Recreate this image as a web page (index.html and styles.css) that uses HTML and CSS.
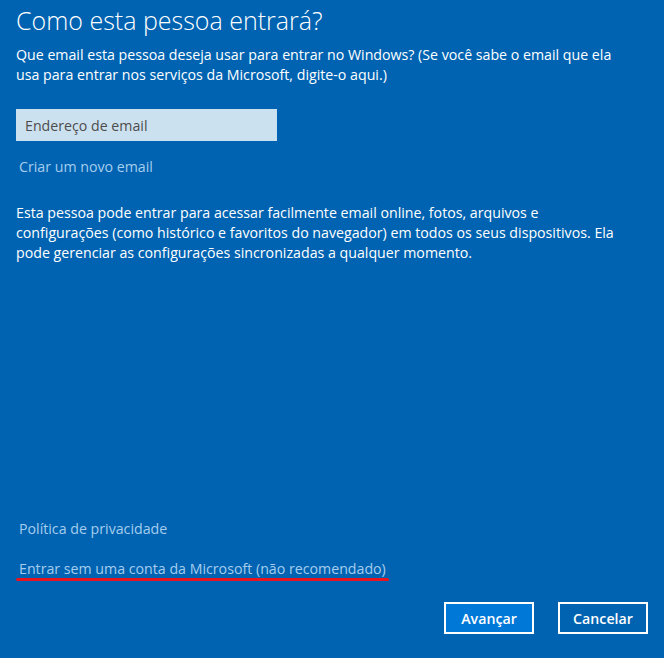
FILE: index.html
```html
<!DOCTYPE html>
<html lang="pt-BR">
<head>
<meta charset="utf-8">
<title>Como esta pessoa entrará?</title>
<link rel="stylesheet" href="styles.css">
</head>
<body>
<div class="page">
  <main class="content">
    <h1 class="title">Como esta pessoa entrará?</h1>
    <p class="intro">Que email esta pessoa deseja usar para entrar no Windows? (Se você sabe o email que ela usa para entrar nos serviços da Microsoft, digite-o aqui.)</p>
    <div class="field">
      <input class="email" type="text" placeholder="Endereço de email">
    </div>
    <a class="link create" href="#">Criar um novo email</a>
    <p class="info">Esta pessoa pode entrar para acessar facilmente email online, fotos, arquivos e configurações (como histórico e favoritos do navegador) em todos os seus dispositivos. Ela pode gerenciar as configurações sincronizadas a qualquer momento.</p>
  </main>
  <footer class="footer">
    <a class="link privacy" href="#">Política de privacidade</a>
    <a class="link local" href="#">Entrar sem uma conta da Microsoft (não recomendado)</a>
    <div class="actions">
      <button class="btn primary" type="button">Avançar</button>
      <button class="btn" type="button">Cancelar</button>
    </div>
  </footer>
</div>
</body>
</html>
```

FILE: styles.css
```css
html, body {
  margin: 0;
  padding: 0;
  height: 100%;
}

body {
  background: #0063b1;
  color: #ffffff;
  font-family: "Open Sans", "Noto Sans", "Liberation Sans", sans-serif;
  font-size: 14.2px;
  line-height: 20px;
}

.page {
  height: 100%;
  box-sizing: border-box;
  display: flex;
  flex-direction: column;
  padding: 0 16px 24px 16px;
}

.content {
  display: flex;
  flex-direction: column;
  align-items: flex-start;
}

.title {
  margin: 0;
  font-size: 25px;
  font-weight: 300;
  line-height: 40px;
  height: 40px;
}

.intro {
  margin: 5px 0 0 0;
  max-width: 618px;
}

.field {
  margin-top: 24px;
}

.email {
  display: block;
  width: 261px;
  height: 32px;
  box-sizing: border-box;
  border: none;
  outline: none;
  background: #cce1f0;
  padding: 0 9px;
  font-family: inherit;
  font-size: 14.2px;
  color: #4c4c4c;
}

.email::placeholder {
  color: #4c4c4c;
  opacity: 1;
}

.link {
  display: inline-block;
  color: #a6cdee;
  text-decoration: none;
  padding-left: 3px;
}

.create {
  margin-top: 16px;
}

.info {
  margin: 26px 0 0 0;
  max-width: 618px;
}

.footer {
  margin-top: auto;
  display: flex;
  flex-direction: column;
  align-items: flex-start;
}

.privacy {
  margin-bottom: 20px;
}

.local {
  position: relative;
}

.local::after {
  content: "";
  position: absolute;
  left: 0;
  right: -3px;
  bottom: -2px;
  height: 3px;
  border-radius: 2px;
  background: #e8141f;
}

.actions {
  align-self: stretch;
  display: flex;
  justify-content: flex-end;
  gap: 24px;
  margin-top: 23px;
}

.btn {
  width: 90px;
  height: 32px;
  box-sizing: border-box;
  border: 2px solid #ffffff;
  background: transparent;
  color: #ffffff;
  font-family: inherit;
  font-size: 14.2px;
  font-weight: 600;
  padding: 0;
  margin: 0;
}

.btn.primary {
  background: #0078d7;
}
```
